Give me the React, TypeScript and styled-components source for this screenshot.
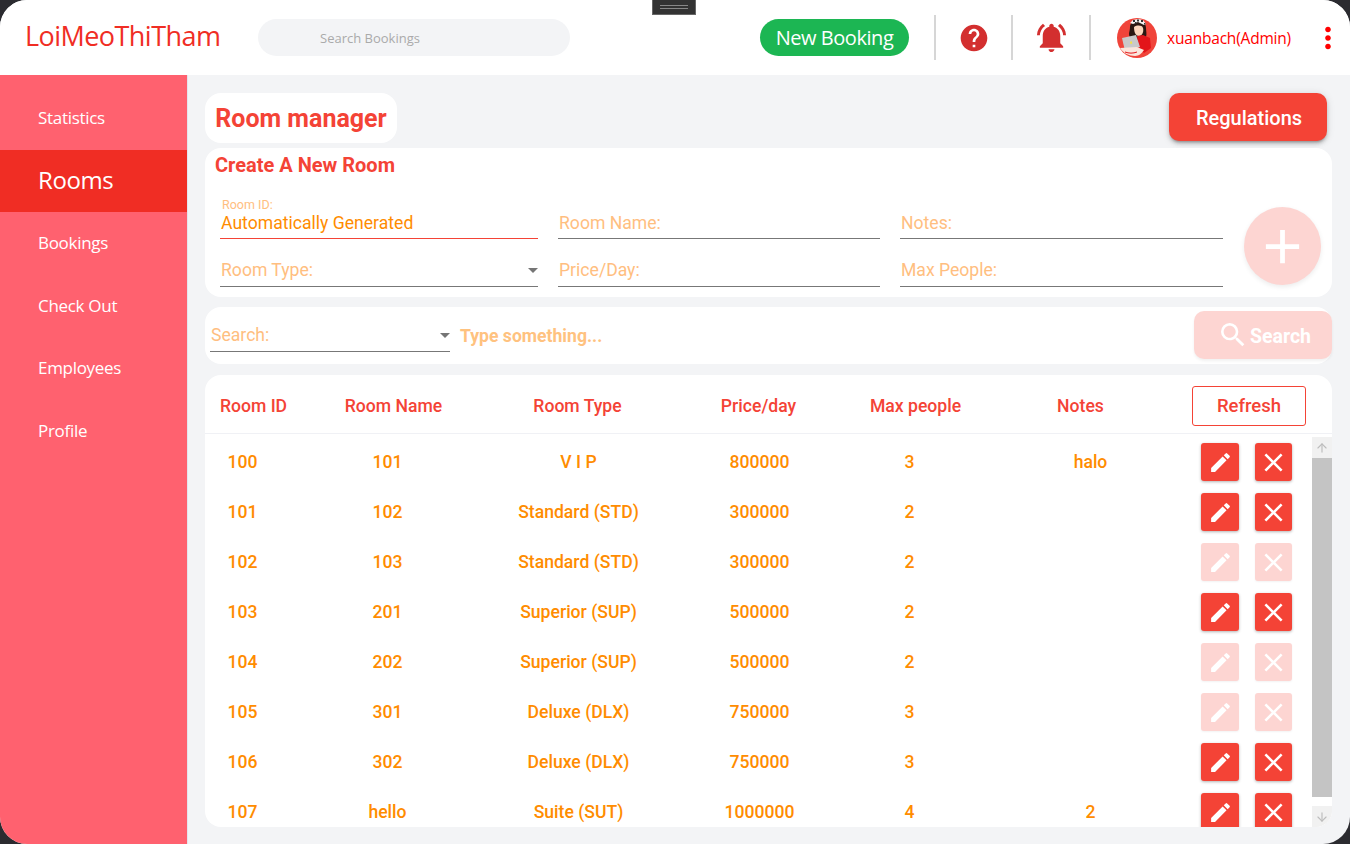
// src/App.tsx
import React from 'react';
import styled, { createGlobalStyle } from 'styled-components';
import { MdAdd, MdArrowDropDown, MdClose, MdEdit, MdHelp, MdMoreVert, MdNotificationsActive, MdSearch } from 'react-icons/md';
import { ArrowDown, ArrowUp } from 'lucide-react';

const RED = '#f44336';
const ORANGE = '#ff8c00';
const PALE_ORANGE = '#ffbe80';
const PALE_RED = '#fdd5d2';
const UI_FONT = '"Open Sans", "Liberation Sans", sans-serif';
const MD_FONT = 'Roboto, "Liberation Sans", sans-serif';

const GlobalStyle = createGlobalStyle`
  html, body {
    margin: 0;
    width: 100%;
    height: 100%;
    overflow: hidden;
    background: #2b2b30;
  }
  * {
    box-sizing: border-box;
  }
`;

const Win = styled.div`
  position: relative;
  width: 1350px;
  height: 844px;
  display: flex;
  flex-direction: column;
  overflow: hidden;
  border-radius: 27px;
  background: #f3f4f6;
`;

const DragHandle = styled.div`
  position: absolute;
  top: -1px;
  left: 652px;
  width: 44px;
  height: 16px;
  display: flex;
  flex-direction: column;
  justify-content: center;
  gap: 2px;
  padding: 0 7px;
  background: #333;
  border: 1px solid #666;
  span {
    height: 1px;
    background: #888;
  }
`;

const Header = styled.header`
  height: 75px;
  flex: none;
  display: flex;
  align-items: center;
  background: #fff;
  padding: 0 0 0 25px;
  > * {
    flex: none;
  }
`;

const Logo = styled.div`
  width: 233px;
  padding-bottom: 4px;
  font: 400 27px ${UI_FONT};
  letter-spacing: -0.55px;
  color: #f02d24;
`;

const SearchPill = styled.div`
  width: 312px;
  height: 37px;
  display: flex;
  align-items: center;
  padding: 1px 0 0 62px;
  border-radius: 19px;
  background: #f3f4f6;
  font: 400 13px ${UI_FONT};
  color: #aaa;
`;

const NewBooking = styled.button`
  margin-left: 190px;
  width: 149px;
  height: 37px;
  border: 0;
  padding: 0;
  border-radius: 19px;
  background: #1cb653;
  color: #fff;
  font: 400 20px ${UI_FONT};
  letter-spacing: -0.45px;
`;

const Divider = styled.div`
  width: 2px;
  height: 45px;
  background: #d6d6d6;
`;

const IconSlot = styled.div<{ $width: number }>`
  width: ${p => p.$width}px;
  display: flex;
  justify-content: center;
  color: #d32f2f;
`;

const UserBox = styled.div`
  display: flex;
  align-items: center;
  gap: 10px;
  margin-left: 26px;
  font: 400 15.5px ${UI_FONT};
  letter-spacing: -0.2px;
  color: #f00;
`;

const MoreBtn = styled.div`
  margin-left: 20px;
  display: flex;
  color: #f00;
`;

const Body = styled.div`
  flex: 1;
  display: flex;
  min-height: 0;
`;

const Sidebar = styled.nav`
  width: 188px;
  flex: none;
  padding-top: 12px;
  background: #ff616f;
  border-right: 1px solid #e4e4ee;
`;

const NavItem = styled.div<{ $active?: boolean }>`
  height: 62.5px;
  display: flex;
  align-items: center;
  padding: 0 0 ${p => (p.$active ? '3px' : '1px')} 38px;
  color: #fff;
  font: 400 ${p => (p.$active ? '24px' : '17px')} ${UI_FONT};
  letter-spacing: ${p => (p.$active ? '-0.4px' : '-0.3px')};
  background: ${p => (p.$active ? '#f02d24' : 'transparent')};
`;

const Main = styled.main`
  flex: 1;
  min-width: 0;
  display: flex;
  flex-direction: column;
  padding: 18px 18px 17px 17px;
`;

const TitleRow = styled.div`
  display: flex;
  justify-content: space-between;
  align-items: flex-start;
  height: 55px;
  padding-right: 5px;
`;

const TitleChip = styled.h1`
  margin: 0;
  width: 192px;
  height: 50px;
  display: flex;
  align-items: center;
  justify-content: center;
  border-radius: 16px;
  background: #fff;
  color: ${RED};
  font: 700 25px ${MD_FONT};
`;

const RaisedButton = styled.button`
  width: 158px;
  height: 48px;
  border: 0;
  padding: 2px 0 0 2px;
  border-radius: 10px;
  background: ${RED};
  color: #fff;
  font: 500 20px ${MD_FONT};
  box-shadow: 0 3px 3px -2px rgba(0, 0, 0, 0.3), 0 3px 4px rgba(0, 0, 0, 0.14), 0 1px 8px rgba(0, 0, 0, 0.12);
`;

const Card = styled.section`
  background: #fff;
  border-radius: 16px;
`;

const CreateCard = styled(Card)`
  height: 149px;
  position: relative;
  padding: 6px 0 0 10px;
`;

const CardTitle = styled.h2`
  margin: 0;
  color: ${RED};
  font: 700 20px/23px ${MD_FONT};
`;

const FieldGrid = styled.div`
  display: grid;
  grid-template-columns: 318px 322px 323px;
  grid-auto-rows: 48px;
  column-gap: 20px;
  margin: 14px 0 0 5px;
`;

const Field = styled.div<{ $focused?: boolean }>`
  position: relative;
  display: flex;
  flex-direction: column;
  justify-content: flex-end;
  padding-bottom: 3px;
  border-bottom: ${p => (p.$focused ? `1.5px solid ${RED}` : '1.5px solid #777')};
  &:nth-child(n + 4) {
    padding-bottom: 4px;
  }
`;

const FloatLabel = styled.span`
  padding-left: 2px;
  margin-bottom: 1px;
  font: 400 12.5px/13px ${MD_FONT};
  color: ${PALE_ORANGE};
`;

const FieldValue = styled.span`
  padding-left: 1px;
  font: 400 17.6px/23px ${MD_FONT};
  color: ${ORANGE};
`;

const Placeholder = styled.span`
  padding-left: 1px;
  font: 400 17.6px/23px ${MD_FONT};
  color: ${PALE_ORANGE};
`;

const SelectArrow = styled.span`
  position: absolute;
  right: -7px;
  bottom: 4px;
  display: flex;
  color: #757575;
`;

const Fab = styled.button`
  position: absolute;
  top: 59px;
  left: 1039px;
  width: 77px;
  height: 78px;
  border: 0;
  padding: 0;
  display: flex;
  align-items: center;
  justify-content: center;
  border-radius: 50%;
  background: ${PALE_RED};
  color: #fff;
  box-shadow: 0 2px 5px rgba(0, 0, 0, 0.08);
`;

const SearchCard = styled(Card)`
  height: 57px;
  margin-top: 10px;
  display: flex;
  align-items: flex-start;
  padding: 4px 0 0 5px;
`;

const SearchSelect = styled.div`
  position: relative;
  width: 240px;
  height: 41px;
  display: flex;
  align-items: flex-end;
  padding-bottom: 4px;
  border-bottom: 1.5px solid #777;
`;

const SearchText = styled.div`
  margin: 14px 0 0 10px;
  font: 700 17.6px/23px ${MD_FONT};
  color: #ffc27f;
`;

const SearchButton = styled.button`
  margin-left: auto;
  width: 138px;
  height: 48px;
  border: 0;
  padding: 0 2px 0 4px;
  display: flex;
  align-items: center;
  justify-content: center;
  gap: 1px;
  border-radius: 10px;
  background: ${PALE_RED};
  color: #fff;
  font: 700 19.5px ${MD_FONT};
  box-shadow: 0 2px 3px rgba(0, 0, 0, 0.06);
  span {
    padding-top: 2px;
  }
`;

const TableCard = styled(Card)`
  flex: 1;
  min-height: 0;
  margin-top: 11px;
  display: flex;
  flex-direction: column;
  overflow: hidden;
`;

const HeadRow = styled.div`
  height: 59px;
  flex: none;
  display: grid;
  grid-template-columns: 96px 184px 184px 178px 136px 194px 15px 114px;
  align-items: center;
  border-bottom: 1px solid #f0f1f5;
  color: ${RED};
  font: 500 17.6px ${MD_FONT};
  text-align: center;
`;

const RefreshButton = styled.button`
  grid-column: 8;
  height: 40px;
  margin-top: 4px;
  padding: 0;
  border: 1px solid ${RED};
  border-radius: 3px;
  background: #fff;
  color: ${RED};
  font: 500 18.5px ${MD_FONT};
`;

const HeadCell = styled.div`
  margin-top: 3px;
  padding-left: 1px;
`;

const TableBody = styled.div`
  flex: 1;
  min-height: 0;
  margin-top: 3px;
  display: flex;
`;

const Rows = styled.div`
  flex: 1;
  min-width: 0;
  overflow: hidden;
`;

const Row = styled.div`
  height: 50px;
  display: grid;
  grid-template-columns: 74px 216px 166px 196px 104px 240px 91px;
  align-items: center;
  color: ${ORANGE};
  font: 500 17.6px ${MD_FONT};
  text-align: center;
`;

const Cell = styled.div`
  padding-left: 1px;
`;

const NotesCell = styled(Cell)`
  padding-left: 19px;
`;

const Actions = styled.div`
  display: flex;
  justify-content: space-between;
`;

const SquareBtn = styled.button<{ $disabled?: boolean; $width: number }>`
  width: ${p => p.$width}px;
  height: 38px;
  border: 0;
  padding: 0;
  display: flex;
  align-items: center;
  justify-content: center;
  border-radius: 3px;
  background: ${p => (p.$disabled ? PALE_RED : RED)};
  color: #fff;
  box-shadow: ${p => (p.$disabled ? '0 1px 2px rgba(0,0,0,0.05)' : '0 1px 3px rgba(0,0,0,0.3)')};
`;

const Scrollbar = styled.div`
  width: 20px;
  flex: none;
  display: flex;
  flex-direction: column;
  background: #fff;
`;

const ScrollArrow = styled.div`
  height: 21px;
  flex: none;
  display: flex;
  align-items: center;
  justify-content: center;
  background: #f1f1f1;
  color: #bdbdbd;
`;

const ScrollThumb = styled.div`
  height: 339px;
  flex: none;
  margin-bottom: 9px;
  background: #c4c4c4;
`;

type Room = { id: number; name: string; type: string; price: number; people: number; notes?: string; locked?: boolean };

const rooms: Room[] = [
  { id: 100, name: '101', type: 'V I P', price: 800000, people: 3, notes: 'halo' },
  { id: 101, name: '102', type: 'Standard (STD)', price: 300000, people: 2 },
  { id: 102, name: '103', type: 'Standard (STD)', price: 300000, people: 2, locked: true },
  { id: 103, name: '201', type: 'Superior (SUP)', price: 500000, people: 2 },
  { id: 104, name: '202', type: 'Superior (SUP)', price: 500000, people: 2, locked: true },
  { id: 105, name: '301', type: 'Deluxe (DLX)', price: 750000, people: 3, locked: true },
  { id: 106, name: '302', type: 'Deluxe (DLX)', price: 750000, people: 3 },
  { id: 107, name: 'hello', type: 'Suite (SUT)', price: 1000000, people: 4, notes: '2' },
];

const navItems = ['Statistics', 'Rooms', 'Bookings', 'Check Out', 'Employees', 'Profile'];

const Avatar = () => (
  <svg width="40" height="40" viewBox="0 0 40 40">
    <circle cx="20" cy="20" r="20" fill="#f0443a" />
    <path d="M13 9c0-4 4-7 8-7s8 3 8 8c0 3 1 6 0 9l-8 3-6 0c-1-2-3-3-3-6 0-2 1-4 1-7z" fill="#2a1712" />
    <path d="M13 5l3-3 5-1 5 1 3 4-2 1-6-3-5 2z" fill="#f4f4f4" />
    <path d="M16 2h2v2h-2zM20 1.500h2v2h-2zM24 2h2v2h-2zM27 5h1.500v1.500H27zM18 4h1.500v1.500H18z" fill="#333" />
    <path d="M17 9c3-2 8-2 9 1 1 4-1 8-4 8-3 0-5-3-5-9z" fill="#fbd5bd" />
    <path d="M20 18l6-1 7 3 1 10-7 5-6-6z" fill="#e3151a" />
    <path d="M5 20l14-3 4 12-15 4z" fill="#c9c9c9" />
    <path d="M13 24l1.500-1 .8 2.500-1.800.5z" fill="#f5e642" />
    <path d="M3 30l17-1 7 3c-2 3-5 6-9 6-6 0-12-3-15-8z" fill="#fbe6dc" />
    <path d="M8 34c4 1.500 8 1.500 12 0" stroke="#e3151a" strokeWidth="1" fill="none" />
  </svg>
);

const SelectDown = () => (
  <SelectArrow>
    <MdArrowDropDown size={24} />
  </SelectArrow>
);

const App: React.FC = () => {
  return (
    <Win>
      <GlobalStyle />
      <DragHandle>
        <span />
        <span />
      </DragHandle>
      <Header>
        <Logo>LoiMeoThiTham</Logo>
        <SearchPill>Search Bookings</SearchPill>
        <NewBooking>New Booking</NewBooking>
        <IconSlot $width={25} />
        <Divider />
        <IconSlot $width={75}>
          <MdHelp size={32} />
        </IconSlot>
        <Divider />
        <IconSlot $width={76}>
          <MdNotificationsActive size={35} />
        </IconSlot>
        <Divider />
        <UserBox>
          <Avatar />
          xuanbach(Admin)
        </UserBox>
        <MoreBtn>
          <MdMoreVert size={34} />
        </MoreBtn>
      </Header>
      <Body>
        <Sidebar>
          {navItems.map(item => (
            <NavItem key={item} $active={item === 'Rooms'}>
              {item}
            </NavItem>
          ))}
        </Sidebar>
        <Main>
          <TitleRow>
            <TitleChip>Room manager</TitleChip>
            <RaisedButton>Regulations</RaisedButton>
          </TitleRow>
          <CreateCard>
            <CardTitle>Create A New Room</CardTitle>
            <FieldGrid>
              <Field $focused>
                <FloatLabel>Room ID:</FloatLabel>
                <FieldValue>Automatically Generated</FieldValue>
              </Field>
              <Field>
                <Placeholder>Room Name:</Placeholder>
              </Field>
              <Field>
                <Placeholder>Notes:</Placeholder>
              </Field>
              <Field>
                <Placeholder>Room Type:</Placeholder>
                <SelectDown />
              </Field>
              <Field>
                <Placeholder>Price/Day:</Placeholder>
              </Field>
              <Field>
                <Placeholder>Max People:</Placeholder>
              </Field>
            </FieldGrid>
            <Fab>
              <MdAdd size={57} />
            </Fab>
          </CreateCard>
          <SearchCard>
            <SearchSelect>
              <Placeholder>Search:</Placeholder>
              <SelectDown />
            </SearchSelect>
            <SearchText>Type something...</SearchText>
            <SearchButton>
              <MdSearch size={32} />
              <span>Search</span>
            </SearchButton>
          </SearchCard>
          <TableCard>
            <HeadRow>
              <HeadCell>Room ID</HeadCell>
              <HeadCell>Room Name</HeadCell>
              <HeadCell>Room Type</HeadCell>
              <HeadCell>Price/day</HeadCell>
              <HeadCell>Max people</HeadCell>
              <HeadCell>Notes</HeadCell>
              <RefreshButton>Refresh</RefreshButton>
            </HeadRow>
            <TableBody>
              <Rows>
                {rooms.map(room => (
                  <Row key={room.id}>
                    <Cell>{room.id}</Cell>
                    <Cell>{room.name}</Cell>
                    <Cell>{room.type}</Cell>
                    <Cell>{room.price}</Cell>
                    <Cell>{room.people}</Cell>
                    <NotesCell>{room.notes}</NotesCell>
                    <Actions>
                      <SquareBtn $width={38} $disabled={room.locked}>
                        <MdEdit size={25} />
                      </SquareBtn>
                      <SquareBtn $width={37} $disabled={room.locked}>
                        <MdClose size={31} />
                      </SquareBtn>
                    </Actions>
                  </Row>
                ))}
              </Rows>
              <Scrollbar>
                <ScrollArrow>
                  <ArrowUp size={14} />
                </ScrollArrow>
                <ScrollThumb />
                <ScrollArrow>
                  <ArrowDown size={14} />
                </ScrollArrow>
              </Scrollbar>
            </TableBody>
          </TableCard>
        </Main>
      </Body>
    </Win>
  );
};

export default App;
